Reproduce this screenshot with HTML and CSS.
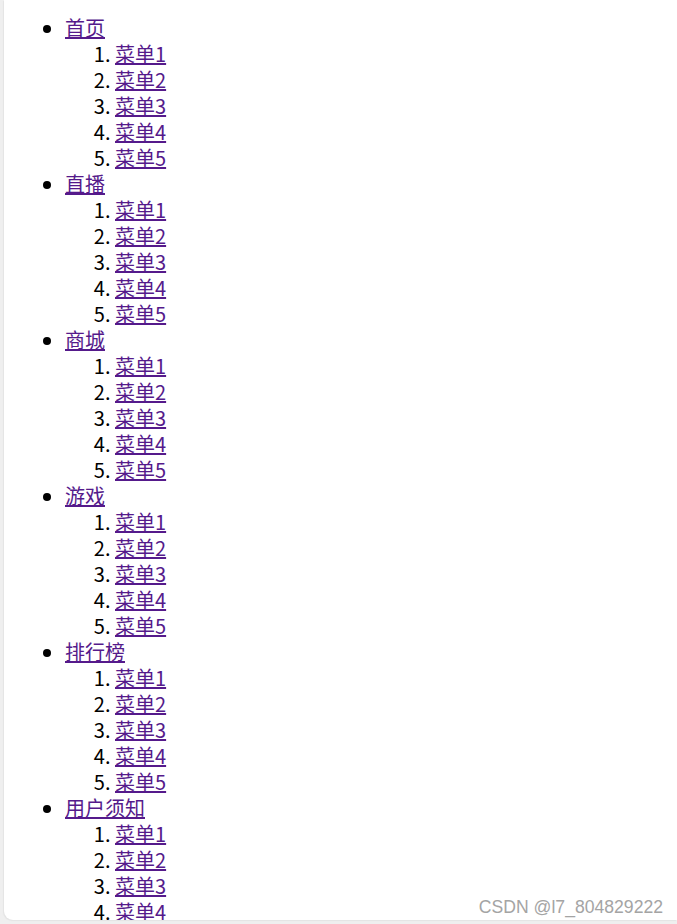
FILE: index.html
```html
<!DOCTYPE html>
<html lang="zh">
<head>
<meta charset="utf-8">
<title>菜单</title>
<link rel="stylesheet" href="styles.css">
</head>
<body>
<div class="panel">
  <ul class="nav">
    <li><a href="#">首页</a>
      <ol><li><a href="#">菜单1</a></li><li><a href="#">菜单2</a></li><li><a href="#">菜单3</a></li><li><a href="#">菜单4</a></li><li><a href="#">菜单5</a></li></ol>
    </li>
    <li><a href="#">直播</a>
      <ol><li><a href="#">菜单1</a></li><li><a href="#">菜单2</a></li><li><a href="#">菜单3</a></li><li><a href="#">菜单4</a></li><li><a href="#">菜单5</a></li></ol>
    </li>
    <li><a href="#">商城</a>
      <ol><li><a href="#">菜单1</a></li><li><a href="#">菜单2</a></li><li><a href="#">菜单3</a></li><li><a href="#">菜单4</a></li><li><a href="#">菜单5</a></li></ol>
    </li>
    <li><a href="#">游戏</a>
      <ol><li><a href="#">菜单1</a></li><li><a href="#">菜单2</a></li><li><a href="#">菜单3</a></li><li><a href="#">菜单4</a></li><li><a href="#">菜单5</a></li></ol>
    </li>
    <li><a href="#">排行榜</a>
      <ol><li><a href="#">菜单1</a></li><li><a href="#">菜单2</a></li><li><a href="#">菜单3</a></li><li><a href="#">菜单4</a></li><li><a href="#">菜单5</a></li></ol>
    </li>
    <li><a href="#">用户须知</a>
      <ol><li><a href="#">菜单1</a></li><li><a href="#">菜单2</a></li><li><a href="#">菜单3</a></li><li><a href="#">菜单4</a></li><li><a href="#">菜单5</a></li></ol>
    </li>
  </ul>
  <div class="watermark">CSDN @l7_804829222</div>
</div>
</body>
</html>
```
FILE: styles.css
```css
html, body {
  margin: 0;
  padding: 0;
  background: #efefef;
}
body {
  width: 677px;
  height: 924px;
  overflow: hidden;
}
.panel {
  position: relative;
  margin-left: 4px;
  height: 920px;
  background: #ffffff;
  border-bottom-left-radius: 9px;
  box-shadow: -1px 1px 1px #e4e4e4;
  overflow: hidden;
  font-family: "Noto Sans CJK SC", "Noto Sans", sans-serif;
  font-size: 20px;
  line-height: 26px;
  color: #000;
}
.nav {
  margin: 0;
  padding: 15px 0 0 61px;
  list-style: disc;
}
.nav ol {
  margin: 0;
  padding-left: 50px;
  list-style: decimal;
}
.nav a {
  color: #551a8b;
  text-decoration: underline;
}
.watermark {
  position: absolute;
  right: 14px;
  bottom: 3px;
  font-family: "Liberation Sans", Arial, sans-serif;
  font-size: 17.6px;
  line-height: 20px;
  color: #a4a4a4;
}
```
